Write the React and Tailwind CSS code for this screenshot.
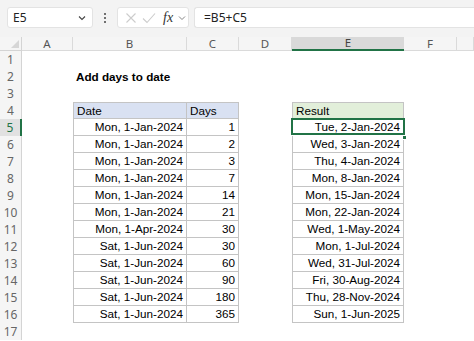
import React from "react";

const rows = [
  ["Mon, 1-Jan-2024", "1", "Tue, 2-Jan-2024"],
  ["Mon, 1-Jan-2024", "2", "Wed, 3-Jan-2024"],
  ["Mon, 1-Jan-2024", "3", "Thu, 4-Jan-2024"],
  ["Mon, 1-Jan-2024", "7", "Mon, 8-Jan-2024"],
  ["Mon, 1-Jan-2024", "14", "Mon, 15-Jan-2024"],
  ["Mon, 1-Jan-2024", "21", "Mon, 22-Jan-2024"],
  ["Mon, 1-Apr-2024", "30", "Wed, 1-May-2024"],
  ["Sat, 1-Jun-2024", "30", "Mon, 1-Jul-2024"],
  ["Sat, 1-Jun-2024", "60", "Wed, 31-Jul-2024"],
  ["Sat, 1-Jun-2024", "90", "Fri, 30-Aug-2024"],
  ["Sat, 1-Jun-2024", "180", "Thu, 28-Nov-2024"],
  ["Sat, 1-Jun-2024", "365", "Sun, 1-Jun-2025"],
];

const cols = ["A", "B", "C", "D", "E", "F", ""];

function RowHead({ n, active }) {
  return (
    <div
      className={
        "h-[17px] flex items-center justify-center text-[12px] border-r " +
        (active
          ? "text-[#217346] bg-[#e1e1e1] border-r-2 border-[#217346]"
          : "text-[#666] bg-[#f5f5f5] border-[#d4d4d4]")
      }
      style={{ fontFamily: "'Noto Sans', sans-serif" }}
    >
      {n}
    </div>
  );
}

export default function App() {
  const cell = "h-[17px] flex items-center px-[3px] text-[11.7px] text-black";
  const bd = "border-[#c4c4c4]";
  return (
    <div
      className="w-[474px] h-[341px] overflow-hidden bg-white"
      style={{ fontFamily: "'Liberation Sans', Arial, sans-serif" }}
    >
      {/* Toolbar */}
      <div className="h-[37px] bg-[#f3f3f3] flex items-start pt-[7px] pl-[7px] gap-[5px]">
        <div className="w-[86px] h-[21px] bg-white rounded-[3px] border border-[#e3e3e3] flex items-center justify-between pl-[5px] pr-[5px]">
          <span className="text-[12px] text-[#222]" style={{ fontFamily: "'Noto Sans', sans-serif" }}>E5</span>
          <svg width="10" height="10" viewBox="0 0 10 10">
            <path d="M2 3.5 L5 6.5 L8 3.5" fill="none" stroke="#444" strokeWidth="1.1" />
          </svg>
        </div>
        <div className="w-[14px] h-[21px] flex flex-col items-center justify-center gap-[2px]">
          <div className="w-[2px] h-[2px] bg-[#444] rounded-full" />
          <div className="w-[2px] h-[2px] bg-[#444] rounded-full" />
          <div className="w-[2px] h-[2px] bg-[#444] rounded-full" />
        </div>
        <div className="w-[72px] h-[21px] bg-white rounded-[3px] border border-[#e3e3e3] flex items-center pl-[7px] gap-[5px]">
          <svg width="12" height="12" viewBox="0 0 12 12">
            <path d="M1.5 1.5 L10.5 10.5 M10.5 1.5 L1.5 10.5" stroke="#cccccc" strokeWidth="1.1" />
          </svg>
          <svg width="14" height="12" viewBox="0 0 14 12">
            <path d="M1 6.5 L5 10.5 L13 1.5" fill="none" stroke="#cccccc" strokeWidth="1.1" />
          </svg>
          <span className="text-[14px] italic text-[#333] ml-[2px] leading-none" style={{ fontFamily: "'Liberation Serif', serif" }}>
            fx
          </span>
          <svg width="8" height="8" viewBox="0 0 8 8">
            <path d="M1 2.5 L4 5.5 L7 2.5" fill="none" stroke="#777" strokeWidth="0.9" />
          </svg>
        </div>
        <div className="flex-1 h-[21px] bg-white rounded-l-[3px] border border-r-0 border-[#e3e3e3] flex items-center pl-[9px]">
          <span className="text-[12px] text-[#222]" style={{ fontFamily: "'Noto Sans', sans-serif" }}>=B5+C5</span>
        </div>
      </div>

      {/* Sheet */}
      <div className="grid grid-cols-[22px_51px_114px_52px_53px_112px_53px_1fr]">
        <div className="h-[14px] bg-[#f5f5f5] border-r border-b border-[#d4d4d4] relative">
          <svg className="absolute right-[2px] bottom-[2px]" width="8" height="8" viewBox="0 0 8 8">
            <path d="M8 0 L8 8 L0 8 Z" fill="#d6d6d6" />
          </svg>
        </div>
        {cols.map((c, i) =>
          c === "E" ? (
            <div
              key={i}
              className="h-[14px] bg-[#d9d9d9] border-b-2 border-[#217346] flex items-center justify-center text-[11.5px] text-[#444]"
              style={{ fontFamily: "'Noto Sans', sans-serif" }}
            >
              {c}
            </div>
          ) : (
            <div
              key={i}
              className="h-[14px] bg-[#f5f5f5] border-r border-b border-[#dadada] flex items-center justify-center text-[11.5px] text-[#555]"
              style={{ fontFamily: "'Noto Sans', sans-serif" }}
            >
              {c}
            </div>
          )
        )}

        <RowHead n={1} />
        <div className="col-span-7 h-[17px]" />
        <RowHead n={2} />
        <div className="h-[17px]" />
        <div className={cell + " col-span-6 font-bold"}>Add days to date</div>
        <RowHead n={3} />
        <div className="col-span-7 h-[17px]" />
        <RowHead n={4} />
        <div className="h-[17px]" />
        <div className={cell + " bg-[#d9e1f2] border " + bd}>Date</div>
        <div className={cell + " bg-[#d9e1f2] border-t border-r border-b " + bd}>Days</div>
        <div className="h-[17px]" />
        <div className={cell + " bg-[#e2efda] border " + bd}>Result</div>
        <div className="col-span-2 h-[17px]" />

        {rows.map((r, i) => {
          const n = i + 5;
          const sel = n === 5;
          return (
            <React.Fragment key={n}>
              <RowHead n={n} active={sel} />
              <div className="h-[17px]" />
              <div className={cell + " justify-end border-l border-r border-b " + bd}>{r[0]}</div>
              <div className={cell + " justify-end border-r border-b " + bd}>{r[1]}</div>
              <div className="h-[17px]" />
              {sel ? (
                <div className="h-[17px] relative">
                  <div className={cell + " justify-end absolute inset-[-1px] border-2 border-[#217346]"}>{r[2]}</div>
                  <div className="absolute right-[-3px] bottom-[-4px] w-[5px] h-[5px] bg-[#217346] border border-white" />
                </div>
              ) : (
                <div className={cell + " justify-end border-l border-r border-b " + bd}>{r[2]}</div>
              )}
              <div className="col-span-2 h-[17px]" />
            </React.Fragment>
          );
        })}
        <RowHead n={17} />
        <div className="col-span-7 h-[17px]" />
      </div>
    </div>
  );
}
